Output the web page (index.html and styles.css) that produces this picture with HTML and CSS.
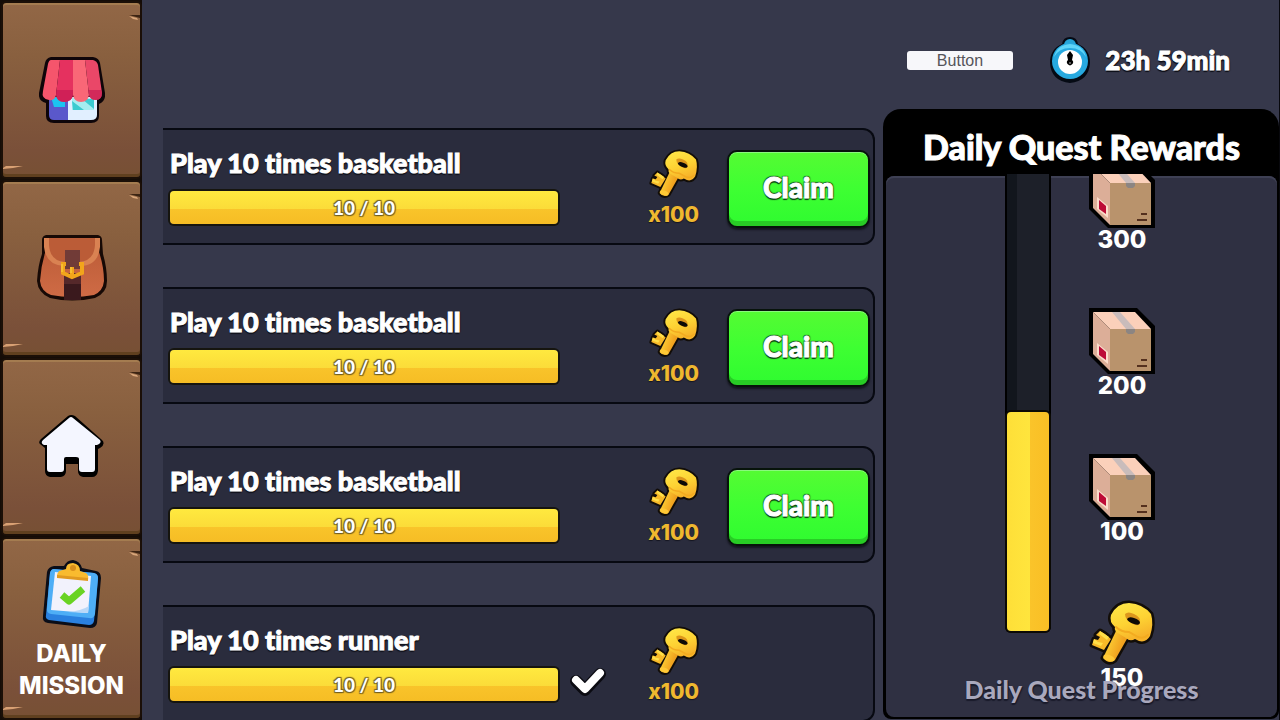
FILE: index.html
```html
<!DOCTYPE html>
<html lang="en">
<head>
    <meta charset="UTF-8">
    <title>Daily Mission</title>
    <link rel="stylesheet" href="styles.css">
</head>
<body>
    <!-- shared icons -->
    <svg class="defs" aria-hidden="true">
        <defs>
            <linearGradient id="gold" x1="0" y1="0" x2="0.4" y2="1">
                <stop offset="0" stop-color="#ffe94a"/>
                <stop offset="0.6" stop-color="#fdd233"/>
                <stop offset="1" stop-color="#f7b32a"/>
            </linearGradient>
            <linearGradient id="shaft" x1="0" y1="0" x2="1" y2="0.5">
                <stop offset="0.2" stop-color="#ffd738"/>
                <stop offset="0.8" stop-color="#f0a11f"/>
            </linearGradient>
            <linearGradient id="leather" x1="0" y1="0" x2="0" y2="1">
                <stop offset="0" stop-color="#b95a36"/>
                <stop offset="1" stop-color="#cf6b45"/>
            </linearGradient>
        </defs>
        <symbol id="key" viewBox="0 0 66 66">
            <g stroke="#120d08" stroke-width="5" stroke-linejoin="round" fill="#120d08">
                <path d="M11 31L16 34L22 39L15 50L3 45L5 39L9 40L11 37L7 35Z"/>
                <path d="M28 29L39 37L26 60Q20 65 14 58Z"/>
                <path d="M22 15Q28 3 40 3Q54 4 62 14Q65 24 61 36Q57 43 50 41L46 39Q41 42 37 38L27 32Q25 29 26 27Q20 22 22 15Z"/>
            </g>
            <path fill="#f7b928" d="M11 31L16 34L22 39L15 50L3 45L5 39L9 40L11 37L7 35Z"/>
            <path fill="#ffdf48" d="M11 31L20 37L18 40L10 34ZM5 39L9 42L14 43L12 46L4 43Z"/>
            <path fill="url(#shaft)" d="M28 29L39 37L26 60Q20 65 14 58Z"/>
            <ellipse cx="20" cy="58" rx="6" ry="3" fill="#ffc936" transform="rotate(20 20 58)"/>
            <path fill="url(#gold)" d="M22 15Q28 3 40 3Q54 4 62 14Q65 24 61 36Q57 43 50 41L46 39Q41 42 37 38L27 32Q25 29 26 27Q20 22 22 15Z"/>
            <path fill="none" stroke="#f3ab20" stroke-width="2" stroke-linecap="round" d="M27 27Q32 32 40 32L49 37Q55 39 59 35"/>
            <path fill="#dc961c" d="M36 14Q39 11 45 14Q52 17 51 23Q50 27 44 24Q36 20 36 14Z"/>
            <path fill="#0d0a06" d="M38 19Q40 16 45 18Q51 20 51 23Q50 26 45 24Q39 22 38 19Z"/>
        </symbol>
        <symbol id="box" viewBox="0 0 66 66">
            <path d="M0 0H48L66 18V66H19L0 47Z"/>
            <path fill="#fbd0ba" d="M4 4H46L62 21H21Z"/>
            <path fill="#dcae98" d="M4 4L21 21V63L4 46Z"/>
            <path fill="#b9936c" d="M21 21H62V63H21Z"/>
            <path fill="#c9bcbb" d="M23 4H31L46 21H37Z"/>
            <path fill="#8c8582" d="M37 21H46V24L44 26H39L37 24Z"/>
            <path fill="#fbdccb" d="M8 35L19 44V56L8 47Z"/>
            <path fill="#bd0b37" d="M10 38L17 44V52L10 47Z"/>
            <path stroke="#54301e" stroke-width="2" d="M52 52H58M48 58H58"/>
        </symbol>
    </svg>

    <div class="screen">
        <nav class="sidebar">
            <a class="tile" href="#shop" aria-label="Shop">
                <svg class="crack crack-top" viewBox="0 0 11 6"><path fill="#3c2413" d="M0 0H11V3Z"/><path fill="#d9a67a" d="M0 1L8 3L9 5L4 4Z"/></svg>
                <svg width="66" height="66" viewBox="0 0 66 66">
                    <path fill="#0e0509" d="M12 0H54Q60 1 61 6L66 36Q67 44 60 47V59Q60 66 52 66H15Q7 66 7 59V46Q-1 44 0 36L6 6Q7 1 12 0Z"/>
                    <path fill="#5a58cb" d="M10 40H30V63H15Q10 63 10 58Z"/>
                    <path fill="#e1efff" d="M29 40H58V58Q58 63 52 63H29Z"/>
                    <path fill="#1cc4f0" d="M12 40H26V50H15Z"/>
                    <path fill="#a5edf0" d="M33 41H55V53H33Z"/>
                    <path fill="#3bcbd0" d="M33 44L45 53H34ZM43 42H55V52Z"/>
                    <path fill="#f5556c" d="M12 3H21L17 38Q16 44 10 43Q2 42 4 34L9 7Q10 3 12 3Z"/>
                    <path fill="#e5315f" d="M21 3H34V38Q33 45 25 45Q18 45 17 38Z"/>
                    <path fill="#f96777" d="M34 3H46L50 38Q49 45 42 45Q35 45 34 38Z"/>
                    <path fill="#ea4768" d="M46 3H54Q58 4 59 8L63 36Q63 43 57 43Q51 43 50 38Z"/>
                    <path fill="#c21551" opacity=".6" d="M17 33H34V38Q33 45 25 45Q18 45 17 38ZM49 33H62L63 36Q63 43 57 43Q51 43 50 38Z"/>
                </svg>
                <svg class="crack crack-bottom" viewBox="0 0 20 4"><path fill="#d9a174" d="M0 3L3 1L20 1L10 3L0 4Z"/></svg>
            </a>
            <a class="tile" href="#bag" aria-label="Bag">
                <svg class="crack crack-top" viewBox="0 0 11 6"><path fill="#3c2413" d="M0 0H11V3Z"/><path fill="#d9a67a" d="M0 1L8 3L9 5L4 4Z"/></svg>
                <svg width="70" height="66" viewBox="0 0 70 66">
                    <path fill="#170905" d="M9 0H61Q65 1 65 5L66 19Q70 33 70 46Q70 58 58 63Q35 68 13 63Q1 58 0 46Q1 30 5 19V5Q5 1 9 0Z"/>
                    <path fill="url(#leather)" d="M8 3H62V17Q67 32 67 46Q66 56 57 60Q35 64 14 60Q4 56 3 46Q4 31 8 18Z"/>
                    <path fill="#d98252" d="M7 3H63V12Q61 31 43 31H27Q9 30 7 12Z"/>
                    <path fill="#bb5c37" d="M12 3H58V10Q57 26 42 27H28Q13 26 12 10Z"/>
                    <path fill="#713b37" d="M28 15H43V34H28Z"/>
                    <path fill="#55282a" d="M27 38H44V61H27Z"/>
                    <path fill="#3a191d" d="M27 49H44V65H27Z"/>
                    <path fill="none" stroke="#f2a51b" stroke-width="4" d="M29 29H26V38L35 42L45 38V29H42M35 32V42"/>
                    <path fill="none" stroke="#ffd544" stroke-width="1" d="M25 29V37M34 32V38"/>
                </svg>
                <svg class="crack crack-bottom" viewBox="0 0 20 4"><path fill="#d9a174" d="M0 3L3 1L20 1L10 3L0 4Z"/></svg>
            </a>
            <a class="tile" href="#home" aria-label="Home">
                <svg class="crack crack-top" viewBox="0 0 11 6"><path fill="#3c2413" d="M0 0H11V3Z"/><path fill="#d9a67a" d="M0 1L8 3L9 5L4 4Z"/></svg>
                <svg width="66" height="64" viewBox="0 0 66 64">
                    <path d="M29 1Q32 -1 36 1L63 25Q67 29 61 33L59 34V56Q58 62 53 62H44Q39 61 39 56V49H27V56Q27 61 22 62H11Q6 61 6 56V33L1 29Q-1 27 2 24Z"/>
                    <path fill="#f4f6ff" d="M30 3Q32 1 34 3L61 25Q63 28 58 30H56V54Q56 57 53 57H43Q40 57 40 54V44Q40 42 37 42H27Q25 42 25 44V54Q25 57 22 57H11Q8 57 8 54V30H5Q1 28 4 25Z"/>
                </svg>
                <svg class="crack crack-bottom" viewBox="0 0 20 4"><path fill="#d9a174" d="M0 3L3 1L20 1L10 3L0 4Z"/></svg>
            </a>
            <a class="tile tile-active" href="#missions">
                <svg class="crack crack-top" viewBox="0 0 11 6"><path fill="#3c2413" d="M0 0H11V3Z"/><path fill="#d9a67a" d="M0 1L8 3L9 5L4 4Z"/></svg>
                <svg width="60" height="68" viewBox="0 0 60 68">
                    <path fill="#0a0d18" d="M12 6H22Q25 0 31 0Q38 1 40 8L54 11Q59 12 59 18L55 63Q54 68 48 68L6 63Q0 62 1 56L5 12Q6 7 12 6Z"/>
                    <path fill="#2a80df" d="M12 9L52 13Q56 14 56 18L52 61Q51 65 47 65L7 60Q3 59 4 55L8 13Q9 9 12 9Z"/>
                    <path fill="#4eaef6" d="M12 9L52 13Q56 14 56 18L53 54Q52 59 47 58L9 54Q4 53 5 48L8 13Q9 9 12 9Z"/>
                    <path fill="#f2f2fc" d="M13 12L49 16L46 53L9 50Z"/>
                    <path fill="#b9d8f8" d="M26 52Q39 51 47 46L46 53Z"/>
                    <path fill="#f9bb2f" d="M17 11L24 9Q24 3 31 3Q38 4 38 11L44 13Q47 15 46 20L15 17Q15 13 17 11Z"/>
                    <path fill="#e19a20" d="M15 15L46 18V21L15 18Z"/>
                    <circle cx="31" cy="8" r="3" fill="#d88e1c"/>
                    <path fill="none" stroke="#69d323" stroke-width="7" stroke-linejoin="round" d="M20 35L27 41L41 29"/>
                </svg>
                <span class="tile-label">DAILY<br>MISSION</span>
                <svg class="crack crack-bottom" viewBox="0 0 20 4"><path fill="#d9a174" d="M0 3L3 1L20 1L10 3L0 4Z"/></svg>
            </a>
        </nav>

        <main class="quests">
            <section class="quest">
                <div class="quest-info">
                    <h2 class="quest-title">Play 10 times basketball</h2>
                    <div class="bar">10 / 10</div>
                </div>
                <div class="quest-status"></div>
                <div class="quest-prize">
                    <svg width="50" height="50"><use href="#key"/></svg>
                    <span>x100</span>
                </div>
                <div class="quest-action"><button class="claim">Claim</button></div>
            </section>
            <section class="quest">
                <div class="quest-info">
                    <h2 class="quest-title">Play 10 times basketball</h2>
                    <div class="bar">10 / 10</div>
                </div>
                <div class="quest-status"></div>
                <div class="quest-prize">
                    <svg width="50" height="50"><use href="#key"/></svg>
                    <span>x100</span>
                </div>
                <div class="quest-action"><button class="claim">Claim</button></div>
            </section>
            <section class="quest">
                <div class="quest-info">
                    <h2 class="quest-title">Play 10 times basketball</h2>
                    <div class="bar">10 / 10</div>
                </div>
                <div class="quest-status"></div>
                <div class="quest-prize">
                    <svg width="50" height="50"><use href="#key"/></svg>
                    <span>x100</span>
                </div>
                <div class="quest-action"><button class="claim">Claim</button></div>
            </section>
            <section class="quest">
                <div class="quest-info">
                    <h2 class="quest-title">Play 10 times runner</h2>
                    <div class="bar">10 / 10</div>
                </div>
                <div class="quest-status">
                    <svg width="36" height="30" viewBox="0 0 36 30">
                        <path fill="none" stroke="#0b0b12" stroke-width="12" stroke-linecap="round" stroke-linejoin="round" d="M6 14L15 23L30 7"/>
                        <path fill="none" stroke="#fff" stroke-width="8" stroke-linecap="round" stroke-linejoin="round" d="M6 13L15 22L30 6"/>
                    </svg>
                </div>
                <div class="quest-prize">
                    <svg width="50" height="50"><use href="#key"/></svg>
                    <span>x100</span>
                </div>
                <div class="quest-action"></div>
            </section>
        </main>

        <aside class="side">
            <div class="topbar">
                <button class="plain-button">Button</button>
                <div class="timer">
                    <svg width="40" height="46" viewBox="0 0 40 46">
                        <path fill="#050a14" d="M20 0Q27 0 28 7Q40 12 40 26Q39 44 20 46Q1 44 0 26Q0 12 12 7Q13 0 20 0Z"/>
                        <circle cx="20" cy="8" r="6" fill="#27a5d8"/>
                        <circle cx="20" cy="24" r="18" fill="#27a9e0"/>
                        <path fill="#5fd5f8" d="M4 20Q7 8 20 7Q33 8 36 20Q31 11 20 11Q9 11 4 20Z"/>
                        <circle cx="20" cy="25" r="12" fill="#fff"/>
                        <path d="M20 14L23 18L22 23A3 3 0 1 1 18 23L17 18Z"/>
                        <circle cx="20" cy="26" r="1" fill="#777"/>
                    </svg>
                    <span>23h 59min</span>
                </div>
            </div>
            <section class="panel">
                <h1 class="panel-title">Daily Quest Rewards</h1>
                <div class="panel-body">
                    <div class="rewards">
                        <div class="track"><div class="track-fill" style="height: 48%"></div></div>
                        <ul class="reward-list">
                            <li><svg width="66" height="66"><use href="#box"/></svg>300</li>
                            <li><svg width="66" height="66"><use href="#box"/></svg>200</li>
                            <li><svg width="66" height="66"><use href="#box"/></svg>100</li>
                            <li><svg width="66" height="66"><use href="#key"/></svg>150</li>
                        </ul>
                    </div>
                    <p class="panel-footer">Daily Quest Progress</p>
                </div>
            </section>
        </aside>
    </div>
</body>
</html>
```
FILE: styles.css
```css
* {
    box-sizing: border-box;
}
body {
    margin: 0;
    background: #36384b;
    color: #fff;
    font-family: Lato, sans-serif;
    font-weight: 900;
    font-variant-ligatures: none;
}
h1, h2, p, ul {
    margin: 0;
    padding: 0;
}
svg {
    display: block;
    flex: none;
}
.defs {
    position: absolute;
    width: 0;
    height: 0;
}
.screen {
    display: flex;
    height: 100vh;
    overflow: hidden;
    border-right: 1px solid #08080d;
}

/* wooden menu */
.sidebar {
    flex: 0 0 142px;
    display: flex;
    flex-direction: column;
    gap: 1px;
    padding: 1px 0 0 1px;
    background: #140c07;
}
.tile {
    position: relative;
    flex: 1;
    display: flex;
    flex-direction: column;
    align-items: center;
    justify-content: center;
    border: 2px solid #1b0f07;
    border-radius: 5px;
    background: linear-gradient(#926746, #89603f 30%, #7a5039 85%, #775034);
    box-shadow: inset 0 2px 0 #a47c50, inset 0 -3px 0 #60401f;
    color: #fff;
    text-decoration: none;
}
.tile-active {
    padding-top: 6px;
}
.crack {
    position: absolute;
}
.crack-top {
    top: 12px;
    right: 0;
    width: 11px;
    height: 6px;
}
.crack-bottom {
    bottom: 8px;
    left: 0;
    width: 20px;
    height: 4px;
}
.tile-label {
    margin-top: 10px;
    font: 800 24px/32px Inter, sans-serif;
    text-align: center;
}

/* quest list */
.quests {
    flex: 1;
    display: flex;
    flex-direction: column;
    gap: 42px;
    min-width: 0;
    padding: 128px 8px 0 21px;
}
.quest {
    flex: none;
    display: flex;
    align-items: center;
    height: 117px;
    padding: 0 3px 0 7px;
    border: 2px solid #070911;
    border-left: 0;
    border-radius: 0 12px 12px 0;
    background: #2a2c3d;
}
.quest-info {
    flex: 1;
    min-width: 0;
}
.quest-title {
    margin-bottom: 14px;
    font-size: 27px;
    font-weight: 900;
    line-height: 28px;
    white-space: nowrap;
    -webkit-text-stroke: 1px #fff;
    text-shadow: 0 2px 1px #10111a, 1px 0 1px #10111a;
}
.bar {
    height: 33px;
    border-radius: 4px;
    background: linear-gradient(#ffe93f, #fbdc39 54%, #f9c42a 54%, #f6bd25);
    box-shadow: 0 0 0 2px #16150f;
    font-size: 19px;
    line-height: 33px;
    text-align: center;
    text-shadow: 1px 1px 1px #75601f, -1px -1px 1px #75601f, 1px -1px 1px #75601f, -1px 1px 1px #75601f;
}
.quest-status {
    flex: 0 0 90px;
    padding: 37px 0 0 12px;
}
.quest-prize {
    flex: 0 0 50px;
    display: flex;
    flex-direction: column;
    align-items: center;
    gap: 5px;
    padding-top: 2px;
    color: #efb82f;
    font: 800 21px/22px Inter, sans-serif;
    text-shadow: 0 1px 1px #141520;
}
.quest-action {
    flex: 0 0 171px;
    padding: 4px 0 0 28px;
}
.claim {
    width: 143px;
    height: 78px;
    padding: 0 0 4px;
    border: 2px solid #07130b;
    border-radius: 10px;
    background: linear-gradient(#55fb33, #3eff32 50%, #2ffb30);
    box-shadow: inset 0 1px 0 #8bf87e, inset 0 -5px 0 #28cc25, 0 2px 2px #14151f;
    color: #fff;
    font: 900 28px/32px Lato, sans-serif;
    -webkit-text-stroke: 1px #fff;
    text-shadow: 1px 1px 1px #14501a, -1px -1px 1px #14501a, 1px -1px 1px #14501a, 0 2px 1px #0c3811;
    cursor: pointer;
}

/* right column */
.side {
    flex: 0 0 396px;
    display: flex;
    flex-direction: column;
    padding-bottom: 1px;
}
.topbar {
    flex: 0 0 109px;
    display: flex;
    align-items: center;
    justify-content: space-between;
    padding: 11px 49px 0 24px;
}
.plain-button {
    width: 106px;
    height: 19px;
    padding: 0;
    border: 0;
    border-radius: 3px;
    background: #f7f7fa;
    color: #55555a;
    font: 16px/19px "Liberation Sans", sans-serif;
}
.timer {
    display: flex;
    align-items: center;
    gap: 15px;
    font-size: 26px;
    line-height: 30px;
    white-space: nowrap;
    -webkit-text-stroke: 1px #fff;
    text-shadow: 0 2px 1px #0c0d15, 1px 1px 1px #0c0d15, -1px 0 1px #0c0d15;
}
.panel {
    flex: 1;
    display: flex;
    flex-direction: column;
    min-height: 0;
    padding: 0 2px 2px 3px;
    border-radius: 18px 18px 8px 8px;
    background: #000;
}
.panel-title {
    padding: 20px 0 11px;
    font-size: 34px;
    font-weight: 900;
    line-height: 36px;
    text-align: center;
    white-space: nowrap;
    -webkit-text-stroke: 1px #fff;
}
.panel-body {
    flex: 1;
    display: flex;
    flex-direction: column;
    min-height: 0;
    border-radius: 8px;
    background: #2f3042;
    box-shadow: inset 0 2px 0 #3e4054;
}
.rewards {
    flex: 1;
    display: flex;
    justify-content: center;
    align-items: flex-end;
    gap: 38px;
    min-height: 0;
    margin-top: -2px;
    padding: 0 3px 4px 0;
    overflow: hidden;
}
.track {
    display: flex;
    align-items: flex-end;
    align-self: stretch;
    width: 46px;
    margin-bottom: 57px;
    padding: 0 2px 2px;
    border-radius: 0 0 6px 6px;
    background: linear-gradient(90deg, #000 2px, #12161d 2px 12px, #1d2029 12px 44px, #000 44px);
}
.track-fill {
    width: 100%;
    border-radius: 4px;
    background: linear-gradient(90deg, #fedf38, #ffe53d 54%, #fac42a 54%, #f9bf25);
    box-shadow: 0 0 0 2px #0c0a05;
}
.reward-list {
    display: flex;
    flex-direction: column;
    gap: 56px;
    list-style: none;
}
.reward-list li {
    display: flex;
    flex-direction: column;
    align-items: center;
    font: 800 24px/24px Inter, sans-serif;
}
.panel-footer {
    position: relative;
    margin-top: -19px;
    padding-bottom: 14px;
    color: #a9a8bd;
    font-size: 25px;
    line-height: 28px;
    text-align: center;
    text-shadow: 0 2px 1px #1a1b2b, 1px 1px 1px #1a1b2b;
}
```
